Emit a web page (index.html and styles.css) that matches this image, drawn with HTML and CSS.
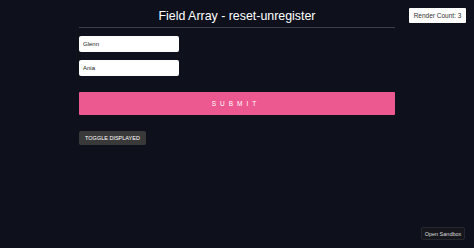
FILE: index.html
```html
<!DOCTYPE html>
<html lang="en">
<head>
  <meta charset="UTF-8" />
  <meta name="viewport" content="width=device-width, initial-scale=1.0"/>
  <title>Field Array - reset-unregister</title>
  <link rel="stylesheet" href="styles.css">
</head>
<body>

  <div class="counter">Render Count: 3</div>

  <form class="form">
    <h1 class="title">Field Array - reset-unregister</h1>

    <div class="fields">
      <input class="field" type="text" value="Glenn" />
      <input class="field" type="text" value="Ania" />
    </div>

    <button type="button" class="submit">Submit</button>

    <div class="actions">
      <button type="button" class="toggle">TOGGLE DISPLAYED</button>
    </div>
  </form>

  <button class="sandbox">Open Sandbox</button>

</body>
</html>
```

FILE: styles.css
```css
body {
  background-color: #0e101c;
  color: white;
  font-family: "Liberation Sans", Arial, sans-serif;
  margin: 0;
  padding: 0;
  height: 248px;
  overflow: hidden;
}

.form {
  width: 316px;
  margin: 0 auto;
  padding-top: 7px;
}

.title {
  margin: 0;
  font-size: 12.4px;
  font-weight: normal;
  text-align: center;
  line-height: 18px;
  padding-bottom: 2px;
  border-bottom: 1px solid #3a3d4c;
}

.fields {
  display: flex;
  flex-direction: column;
  gap: 8px;
  margin-top: 8px;
}

.field {
  box-sizing: border-box;
  width: 100px;
  height: 16px;
  border: none;
  border-radius: 2px;
  padding: 0 4px;
  font-family: inherit;
  font-size: 6px;
  color: #222;
  background: white;
}

.submit {
  display: block;
  width: 100%;
  height: 23px;
  margin-top: 16px;
  background: #ec5990;
  color: white;
  border: none;
  border-radius: 1px;
  font-family: inherit;
  font-size: 6.5px;
  letter-spacing: 4px;
  text-transform: uppercase;
  padding-left: 4px;
}

.actions {
  display: flex;
  margin-top: 16px;
}

.toggle {
  height: 14px;
  width: 67px;
  padding: 0;
  background: #393939;
  color: white;
  border: none;
  border-radius: 2px;
  font-family: inherit;
  font-size: 5.5px;
}

.counter {
  position: absolute;
  top: 8px;
  right: 8px;
  width: 57px;
  height: 15px;
  line-height: 15px;
  background: white;
  color: #333;
  font-size: 6.5px;
  text-align: center;
  border-radius: 1px;
}

.sandbox {
  position: absolute;
  bottom: 8px;
  right: 9px;
  height: 13px;
  width: 44px;
  padding: 0;
  background: #15161c;
  color: #ddd;
  border: 1px solid #26272e;
  border-radius: 2px;
  font-family: inherit;
  font-size: 5.5px;
}
```
